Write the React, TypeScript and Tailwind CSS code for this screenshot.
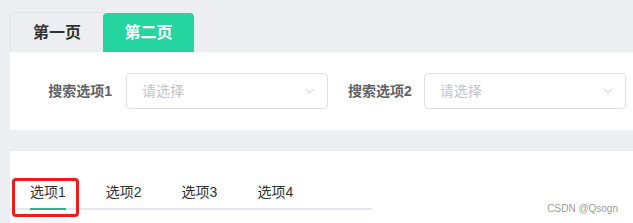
import { ChevronDown } from "lucide-react";

const FONT = { fontFamily: '"Liberation Sans", "Noto Sans CJK SC", sans-serif' };

const SEARCH_FIELDS = [
  { label: "搜索选项1", width: "w-[202px]" },
  { label: "搜索选项2", width: "w-[202px]" },
];

const SUB_TABS = ["选项1", "选项2", "选项3", "选项4"];

export default function App() {
  return (
    <div className="h-[223px] w-[633px] overflow-hidden bg-[#edeef2] pl-[10px] pt-[12px]" style={FONT}>
      {/* page tabs */}
      <div className="flex h-[40px] items-end">
        <div className="flex h-[40px] w-[93px] items-center justify-center rounded-tl-[4px] border-l border-t border-[#e2e4ea] bg-[#edeef2] text-[16px] font-bold text-[#303133]">
          第一页
        </div>
        <div className="flex h-[39px] w-[91px] items-center justify-center rounded-t-[4px] bg-[#25d5a0] text-[16px] font-bold text-white">
          第二页
        </div>
      </div>

      {/* search panel */}
      <div className="flex h-[78px] items-center bg-white">
        <div className="flex items-center">
          <span className="w-[116px] pr-[14px] text-right text-[14px] font-bold text-[#606266]">
            {SEARCH_FIELDS[0].label}
          </span>
          <Select width={SEARCH_FIELDS[0].width} />
        </div>
        <div className="ml-[20px] flex items-center">
          <span className="pr-[12px] text-[14px] font-bold text-[#606266]">{SEARCH_FIELDS[1].label}</span>
          <Select width={SEARCH_FIELDS[1].width} />
        </div>
      </div>

      {/* sub tabs panel */}
      <div className="relative mt-[21px] h-[72px] bg-white">
        <div className="absolute left-[2px] top-[27px] h-[39px] w-[67px] rounded-[4px] border-[3px] border-[#f21b1b]" />
        <div className="flex w-[362px] border-b-2 border-[#e4e7ed] pl-[20px] pt-[31px]">
          {SUB_TABS.map((tab, i) => (
            <div key={tab} className="relative mr-[40px] pb-[6px] text-[14px] leading-[20px] text-[#303133]">
              {tab}
              {i === 0 ? (
                <div className="absolute -bottom-[2px] left-0 h-[2px] w-full bg-[#2bb38a]" />
              ) : null}
            </div>
          ))}
        </div>
        <span className="absolute right-[15px] top-[50px] text-[10px] text-[#9a9a9a]">CSDN @Qsogn</span>
      </div>
    </div>
  );
}

function Select({ width }: { width: string }) {
  return (
    <div
      className={`flex h-[36px] ${width} items-center justify-between rounded-[4px] border border-[#dcdfe6] bg-white pl-[15px] pr-[10px]`}
    >
      <span className="text-[14px] text-[#c0c4cc]">请选择</span>
      <ChevronDown className="h-[14px] w-[14px] text-[#c0c4cc]" strokeWidth={1.5} />
    </div>
  );
}
